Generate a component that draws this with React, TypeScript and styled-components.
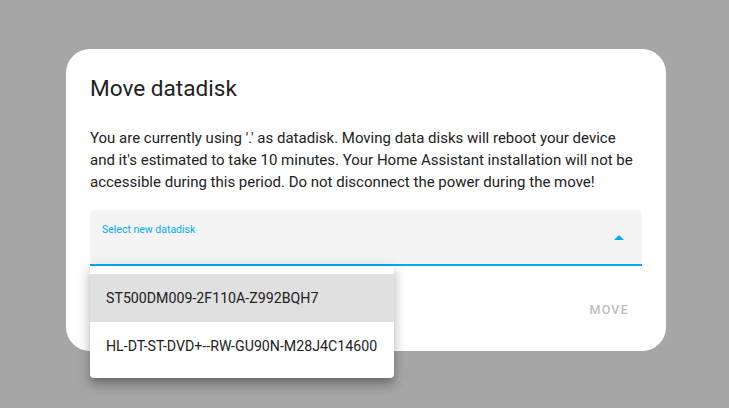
import React from "react";
import styled, { createGlobalStyle } from "styled-components";

const Global = createGlobalStyle`
  html, body { margin: 0; padding: 0; }
  body {
    background: #a6a6a6;
    font-family: Roboto, "Noto Sans", sans-serif;
    width: 729px;
    height: 408px;
    overflow: hidden;
  }
`;

const Dialog = styled.div`
  position: relative;
  margin: 49px 0 0 66px;
  width: 600px;
  height: 302px;
  box-sizing: border-box;
  background: #ffffff;
  border-radius: 24px;
  padding: 24px 24px 0 24px;
  display: flex;
  flex-direction: column;
`;

const Title = styled.h2`
  margin: 0;
  font-size: 22.6px;
  font-weight: 400;
  line-height: 32px;
  color: #212121;
`;

const Body = styled.p`
  margin: 22px 0 0 0;
  font-size: 15px;
  line-height: 22px;
  color: #212121;
`;

const SelectWrap = styled.div`
  position: relative;
  margin-top: 17px;
`;

const Field = styled.div`
  height: 56px;
  box-sizing: border-box;
  background: #f4f4f4;
  border-radius: 4px 4px 0 0;
  border-bottom: 2px solid #03a9f4;
  display: flex;
  align-items: flex-start;
  justify-content: space-between;
  padding: 14px 18px 0 12px;
`;

const Label = styled.span`
  font-size: 10.5px;
  line-height: 12px;
  color: #03a9f4;
`;

const Arrow = styled.svg`
  margin-top: 11px;
`;

const Menu = styled.div`
  position: absolute;
  top: 56px;
  left: 0;
  width: 304px;
  background: #ffffff;
  border-radius: 0 0 4px 4px;
  padding: 8px 0;
  box-shadow: 0 5px 5px -3px rgba(0,0,0,0.2), 0 8px 10px 1px rgba(0,0,0,0.14), 0 3px 14px 2px rgba(0,0,0,0.12);
  z-index: 2;
`;

const Item = styled.div<{ $active?: boolean }>`
  height: 48px;
  display: flex;
  align-items: center;
  padding: 0 16px;
  font-size: 14.2px;
  white-space: nowrap;
  color: #212121;
  background: ${(p) => (p.$active ? "#e0e0e0" : "transparent")};
`;

const Actions = styled.div`
  display: flex;
  justify-content: flex-end;
  margin-top: 36px;
  padding-right: 13px;
`;

const Button = styled.button`
  border: none;
  background: none;
  font-family: Roboto, sans-serif;
  font-size: 12.5px;
  font-weight: 500;
  letter-spacing: 1.25px;
  color: #bdbdbd;
  text-transform: uppercase;
  padding: 0;
`;

export default function App() {
  return (
    <>
      <Global />
      <Dialog>
        <Title>Move datadisk</Title>
        <Body>
          You are currently using '.' as datadisk. Moving data disks will reboot your device
          and it's estimated to take 10 minutes. Your Home Assistant installation will not be
          accessible during this period. Do not disconnect the power during the move!
        </Body>
        <SelectWrap>
          <Field>
            <Label>Select new datadisk</Label>
            <Arrow width="10" height="5" viewBox="0 0 10 5">
              <polygon points="0,5 5,0 10,5" fill="#03a9f4" />
            </Arrow>
          </Field>
          <Menu>
            <Item $active>ST500DM009-2F110A-Z992BQH7</Item>
            <Item>HL-DT-ST-DVD+--RW-GU90N-M28J4C14600</Item>
          </Menu>
        </SelectWrap>
        <Actions>
          <Button>Move</Button>
        </Actions>
      </Dialog>
    </>
  );
}
